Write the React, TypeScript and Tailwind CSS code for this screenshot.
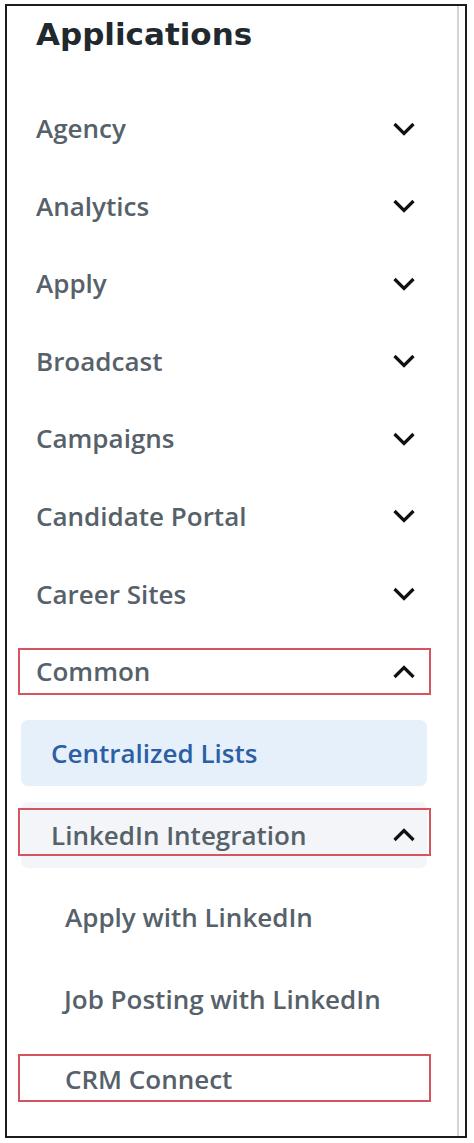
import React from "react";

const Chevron = ({ up = false }: { up?: boolean }) => (
  <svg width="24" height="14" viewBox="0 0 24 14" className="shrink-0">
    <path
      d={up ? "M2.5 12 L12 2.5 L21.5 12" : "M2.5 2 L12 11.5 L21.5 2"}
      fill="none"
      stroke="#111"
      strokeWidth="3.2"
      strokeLinecap="butt"
      strokeLinejoin="miter"
    />
  </svg>
);

const items = [
  "Agency",
  "Analytics",
  "Apply",
  "Broadcast",
  "Campaigns",
  "Candidate Portal",
  "Career Sites",
];

const itemFont = { fontFamily: '"Open Sans", "Liberation Sans", sans-serif' };

export default function App() {
  return (
    <div className="w-[474px] h-[1143px] bg-white pt-[4px] pl-[5px]">
      <div className="w-[462px] h-[1134px] border-2 border-[#1c1c1c] flex">
        <div className="w-[450px] h-full flex flex-col" style={itemFont}>
          <div className="pt-[10px] pl-[29px]">
            <h1
              className="text-[31px] leading-[36px] font-bold text-[#1f292e]"
              style={{ fontFamily: '"DejaVu Sans", "Noto Sans", sans-serif' }}
            >
              Applications
            </h1>
          </div>

          <div className="mt-[53px] flex flex-col gap-[30.6px]">
            {items.map((t) => (
              <div
                key={t}
                className="ml-[11px] w-[413px] h-[47px] pl-[18px] pr-[15px] flex items-center justify-between"
              >
                <span className="text-[26px] font-semibold text-[#56616a]">{t}</span>
                <Chevron />
              </div>
            ))}
            <div className="ml-[11px] w-[413px] h-[47px] pl-[16px] pr-[13px] flex items-center justify-between border-2 border-[#d4545f]">
              <span className="text-[26px] font-semibold text-[#56616a]">Common</span>
              <Chevron up />
            </div>
          </div>

          <div className="mt-[25px] ml-[14px] w-[406px] h-[66px] rounded-[7px] bg-[#e6f0fa] pl-[30px] flex items-center">
            <span className="text-[26px] font-semibold text-[#2c5ea6]">Centralized Lists</span>
          </div>

          <div className="relative mt-[16px] ml-[14px] w-[406px] h-[66px] rounded-[7px] bg-[#f3f5f8] pl-[30px] pr-[11px] flex items-center justify-between">
            <span className="text-[26px] font-semibold text-[#56616a]">LinkedIn Integration</span>
            <Chevron up />
            <div className="absolute left-[-3px] top-[6px] w-[413px] h-[48px] border-2 border-[#d4545f] pointer-events-none" />
          </div>

          <div className="mt-[25px] ml-[11px] w-[413px] h-[48px] pl-[47px] flex items-center">
            <span className="text-[26px] font-semibold text-[#56616a]">Apply with LinkedIn</span>
          </div>
          <div className="mt-[34px] ml-[11px] w-[413px] h-[48px] pl-[46px] flex items-center">
            <span className="text-[26px] font-semibold text-[#56616a]">Job Posting with LinkedIn</span>
          </div>
          <div className="mt-[31px] ml-[11px] w-[413px] h-[48px] pl-[45px] pt-[3px] flex items-center border-2 border-[#d4545f]">
            <span className="text-[26px] font-semibold text-[#56616a]">CRM Connect</span>
          </div>
        </div>
        <div className="w-[2px] h-full bg-[#d3d3d3]" />
        <div className="flex-1" />
      </div>
    </div>
  );
}
